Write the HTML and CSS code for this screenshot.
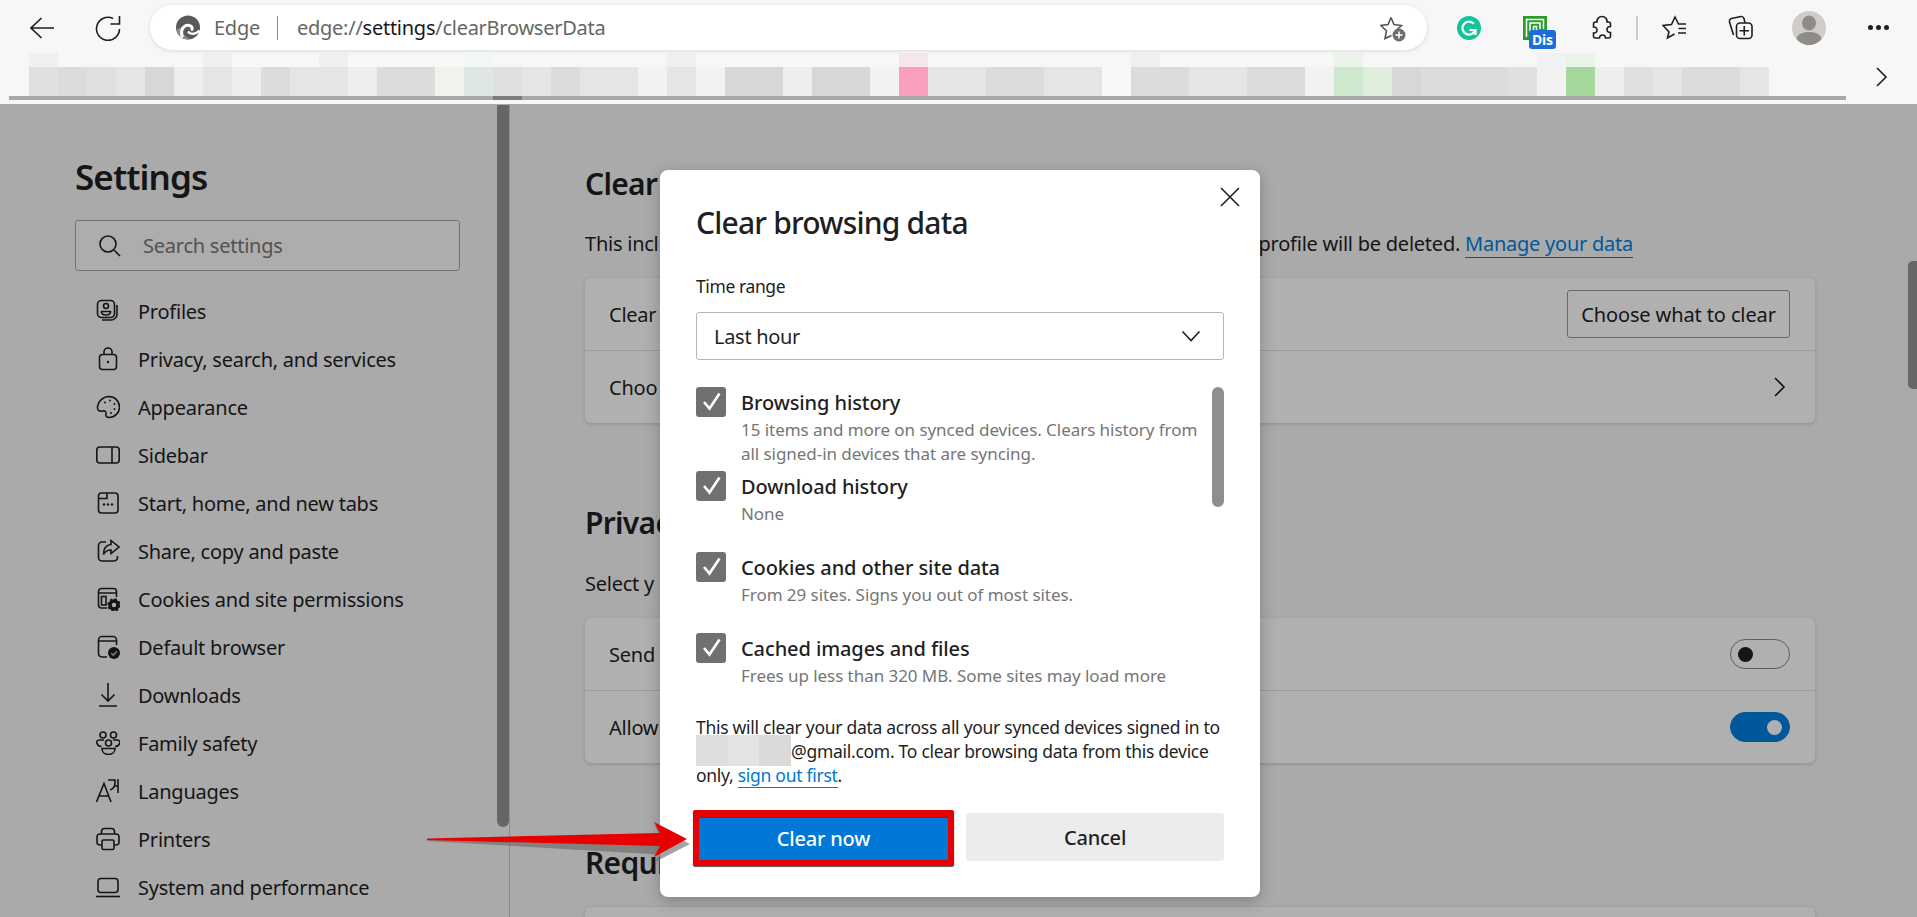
FILE: index.html
```html
<!DOCTYPE html>
<html lang="en">
<head>
<meta charset="utf-8">
<title>Clear browsing data</title>
<link rel="stylesheet" href="styles.css">
</head>
<body>
<svg class="defs" width="0" height="0" aria-hidden="true"><defs>
<symbol id="check" viewBox="0 0 30 30"><path d="M8 15l5.500 6.500L23.500 6.500" fill="none" stroke="#fff" stroke-width="2.600"/></symbol>
</defs></svg>
<header class="toolbar">
  <svg class="back" width="24" height="22" viewBox="0 0 24 22"><path d="M11.500 1L1 11l10.500 10M1 11h23" class="ln"/></svg>
  <svg class="refresh" width="26" height="26" viewBox="0 0 26 26"><path d="M18 3.500A11.500 11.500 0 1 0 24.500 14" class="ln"/><path d="M24.500 1v8h-9" class="ln"/></svg>
  <div class="address">
    <svg class="edge" width="24" height="25" viewBox="0 0 24 25"><circle cx="12" cy="12.500" r="12" fill="#5a5a5a"/><path d="M1 14c0 6 5 10.500 11 10.500 1 0 2-.1 3-.4C9 23 5 17 8 11z" fill="#8e8e8e"/><path d="M6.500 22.500C3.500 15.500 8 9 13.500 10.500c3 .8 3.500 3.300 1.500 4.500" fill="none" stroke="#fff" stroke-width="3"/><path d="M12 16.500c2.500 3.500 7.500 3 11.500-1" fill="none" stroke="#fff" stroke-width="2.400"/></svg>
    <span class="edge-name">Edge</span>
    <span class="addr-sep"></span>
    <span class="url">edge://<b>settings</b>/clearBrowserData</span>
    <svg class="star-add" width="27" height="26" viewBox="0 0 27 26"><path d="M11 1.500l3 7 7.500 1-5.500 5M11 1.500l-3 7-7 1 5.500 5.500-1.500 7.500 6.500-3" class="star-ln"/><circle cx="19" cy="19" r="6.500" fill="#6e6e6e"/><path d="M19 15.500v7M15.500 19h7" stroke="#fff" stroke-width="1.500"/></svg>
  </div>
  <svg class="grammarly" width="24" height="24" viewBox="0 0 24 24"><circle cx="12" cy="12" r="12" fill="#15c39a"/><path d="M16.800 7.800a6.500 6.500 0 1 0 1.200 6.700" fill="none" stroke="#fff" stroke-width="2.200"/><path d="M12.500 14h6v5" fill="none" stroke="#fff" stroke-width="2.200"/></svg>
  <div class="ext">
    <svg width="26" height="26" viewBox="0 0 26 26"><rect x="1" y="1" width="24" height="24" fill="#2a9d2a"/><path d="M4.500 22V4.500h17V14M8 22V8h10v6M11.500 22V11.500h3V17" fill="none" stroke="#fff" stroke-width="1.500"/></svg>
    <span class="dis">Dis</span>
  </div>
  <svg class="puzzle" width="24" height="26" viewBox="0 0 24 26"><path d="M7 7c-.5-3 2-5.500 5-5.500s5.500 2.500 5 5.500h1.500c1.500 0 2 1 2 2v2.500c-2.500 0-3.500 1.500-3.500 3s1 3 3.500 3V21c0 1.500-.5 2-2 2h-3c0-2-1-3-3-3s-3 1-3 3H5.500c-1.500 0-2-.5-2-2v-3c2 0 3.500-1 3.500-3s-1.500-3-3.500-3V9c0-1 .5-2 2-2z" class="ln"/></svg>
  <span class="tb-sep"></span>
  <svg class="fav" width="26" height="25" viewBox="0 0 26 25"><path d="M16.500 9L13 2 9.500 9.500 1 10.500l6 6.500L5.500 23l7-4" class="ln"/><path d="M16 9h8M16.500 13.500h7.500M16 18h8" class="ln"/></svg>
  <svg class="coll" width="26" height="26" viewBox="0 0 26 26"><path d="M5.500 20L1.500 7a3 3 0 0 1 2-3.500L13 1.500a3 3 0 0 1 3 2L17 8" class="ln"/><rect x="8.500" y="8" width="15.500" height="15.500" rx="3.500" class="ln"/><path d="M16.250 11v9.500M11.500 15.750h9.500" class="ln"/></svg>
  <div class="avatar"><svg width="34" height="34" viewBox="0 0 34 34"><circle cx="17" cy="17" r="17" fill="#cfcdc9"/><ellipse cx="17" cy="12" rx="7" ry="7.500" fill="#8f8c88"/><path d="M4.500 28c1-5 6-7 12.500-7s11.500 2 12.500 7c-3 3.500-7.500 6-12.500 6s-9.500-2.500-12.500-6z" fill="#8f8c88"/></svg></div>
  <div class="more"><i></i><i></i><i></i></div>
</header>
<div class="bookmarks">
  <div class="mosaic">
    <div class="strip top">
      <i class="e"></i><i></i><i></i><i></i><i></i><i></i><i class="e"></i><i></i><i></i><i></i><i class="e"></i><i></i><i></i><i></i><i></i><i class="m"></i><i></i><i></i><i></i><i></i><i></i><i></i><i class="e"></i><i></i><i></i><i></i><i></i><i></i><i></i><i></i><i class="p"></i><i></i><i></i><i></i><i></i><i></i><i></i><i></i><i class="e"></i><i></i><i></i><i></i><i></i><i></i><i></i><i class="v"></i><i></i><i></i><i></i><i></i><i></i><i></i><i class="b"></i><i class="v"></i>
    </div>
    <div class="strip low">
      <i class="g0"></i><i class="g1"></i><i class="g0"></i><i class="g3"></i><i class="g2"></i><i class="g4"></i><i class="g3"></i><i class="g4"></i><i class="g1"></i><i class="g3"></i><i class="g3"></i><i class="g4"></i><i class="g1"></i><i class="g1"></i><i class="cream"></i><i class="mint"></i><i class="mauve"></i><i class="g3"></i><i class="g1"></i><i class="g3"></i><i class="g3"></i><i class="g5"></i><i class="g3"></i><i class="g5"></i><i class="g2"></i><i class="g2"></i><i class="g4"></i><i class="g2"></i><i class="g2"></i><i class="g5"></i><i class="pink"></i><i class="g3"></i><i class="g3"></i><i class="g1"></i><i class="g1"></i><i class="g3"></i><i class="g3"></i><i class="g6"></i><i class="g1"></i><i class="g1"></i><i class="g3"></i><i class="g3"></i><i class="g1"></i><i class="g1"></i><i class="g5"></i><i class="gr1"></i><i class="gr2"></i><i class="g2"></i><i class="g1"></i><i class="g1"></i><i class="g1"></i><i class="g0"></i><i class="g5"></i><i class="gr0"></i><i class="g4"></i><i class="g0"></i><i class="g3"></i><i class="g1"></i><i class="g1"></i><i class="g3"></i>
    </div>
    <div class="hbar"><span class="hthumb"></span></div>
  </div>
  <svg class="bm-next" width="14" height="20" viewBox="0 0 14 20"><path d="M2 1l9 9-9 9" class="ln"/></svg>
</div>
<div class="page">
  <aside class="sidebar">
    <h1 class="side-title">Settings</h1>
    <div class="search">
      <svg width="24" height="24" viewBox="0 0 24 24"><circle cx="10" cy="10" r="8" class="ln"/><path d="M16 16l6 6" class="ln"/></svg>
      <span>Search settings</span>
    </div>
    <nav class="nav">
      <a><svg width="24" height="24" viewBox="0 0 24 24"><rect x="1.500" y="1.500" width="17" height="17" rx="4" class="ln"/><circle cx="10" cy="7" r="2.500" class="ln"/><path d="M5.500 12.500h9v1a4 4 0 0 1-4 2.500h-1a4 4 0 0 1-4-2.500z" class="ln"/><path d="M21 6v9a6 6 0 0 1-6 6H6" class="ln"/></svg>Profiles</a>
      <a><svg width="24" height="24" viewBox="0 0 24 24"><rect x="3.500" y="7.500" width="17" height="15" rx="3" class="ln"/><path d="M8 7.500V5a4 4 0 0 1 8 0v2.500" class="ln"/><circle cx="12" cy="15" r="1.200" fill="#1f1f1f"/></svg>Privacy, search, and services</a>
      <a><svg width="24" height="24" viewBox="0 0 24 24"><path d="M13 1.500a10.500 10.500 0 0 1 0 21c-2.500 0-3.500-1.500-3-3.500.4-2-1-3.500-3-3-3 .7-5.500-.5-5.500-3C1.500 6.500 7 1.500 13 1.500z" class="ln"/><circle cx="9" cy="7.500" r="1" fill="#1f1f1f"/><circle cx="14" cy="5.500" r="1" fill="#1f1f1f"/><circle cx="18.500" cy="9" r="1" fill="#1f1f1f"/><circle cx="18.500" cy="14" r="1" fill="#1f1f1f"/><circle cx="15" cy="18" r="1" fill="#1f1f1f"/></svg>Appearance</a>
      <a><svg width="24" height="24" viewBox="0 0 24 24"><rect x=".8" y="4" width="22.400" height="16" rx="3" class="ln"/><path d="M16 4v16" class="ln"/></svg>Sidebar</a>
      <a><svg width="24" height="24" viewBox="0 0 24 24"><rect x="2.500" y="2" width="19.500" height="20" rx="3" class="ln"/><path d="M2.500 7.500h8.500V2" class="ln"/><circle cx="8" cy="13.500" r="1.200" fill="#1f1f1f"/><circle cx="12" cy="13.500" r="1.200" fill="#1f1f1f"/><circle cx="16" cy="13.500" r="1.200" fill="#1f1f1f"/></svg>Start, home, and new tabs</a>
      <a><svg width="24" height="24" viewBox="0 0 24 24"><path d="M10 3H6a3.500 3.500 0 0 0-3.500 3.500v12A3.500 3.500 0 0 0 6 22h12a3.500 3.500 0 0 0 3.500-3.500V17" class="ln"/><path d="M15 1.500l8 6.500-8 6.500V11c-3.500 0-6 1.500-7.500 4.500C7.500 10 10 6 15 5.500z" class="ln"/></svg>Share, copy and paste</a>
      <a><svg width="24" height="24" viewBox="0 0 24 24"><path d="M11 21H5.500a3 3 0 0 1-3-3V4.500a3 3 0 0 1 3-3h12a3 3 0 0 1 3 3V10M2.500 6h18" class="ln"/><rect x="5.500" y="9.500" width="4.500" height="8.500" class="ln"/><circle cx="18" cy="18" r="4" fill="none" stroke="#1f1f1f" stroke-width="3.500"/><circle cx="18" cy="18" r="5.800" fill="none" stroke="#1f1f1f" stroke-width="1.800" stroke-dasharray="2.500 2"/></svg>Cookies and site permissions</a>
      <a><svg width="24" height="24" viewBox="0 0 24 24"><path d="M11 22H6a3.500 3.500 0 0 1-3.500-3.500V5A3.500 3.500 0 0 1 6 1.500h11A3.500 3.500 0 0 1 20.500 5v5M2.500 6h18" class="ln"/><circle cx="18" cy="18" r="6" fill="#1f1f1f"/><path d="M15.300 18.200l2 2 3.500-4" fill="none" stroke="#bbb" stroke-width="1.400"/></svg>Default browser</a>
      <a><svg width="24" height="24" viewBox="0 0 24 24"><path d="M12 0v18M5.500 11.500L12 18l6.500-6.500M3 23h18" class="ln"/></svg>Downloads</a>
      <a><svg width="24" height="24" viewBox="0 0 24 24"><circle cx="7" cy="4" r="3" class="ln"/><circle cx="17.500" cy="4" r="3" class="ln"/><circle cx="12.500" cy="12" r="3" class="ln"/><path d="M8 9H3.500C1.500 9 0 10.500 1 12.500c.7 2 2.500 3 4.500 3M17 9h4c2 0 3.500 1.500 2.500 3.500-.7 2-2.500 3-4.500 3M6 17.500h13c0 4-3 6-6.500 6s-6.500-2-6.500-6z" class="ln"/></svg>Family safety</a>
      <a><svg width="24" height="24" viewBox="0 0 24 24"><path d="M.5 23L8 4.500 15 23M3.500 17h9M12 1h7v3c0 3-2 6-5 7M22 0v14M22 7h-3" class="ln"/></svg>Languages</a>
      <a><svg width="24" height="24" viewBox="0 0 24 24"><path d="M5.500 7V4.500a3 3 0 0 1 3-3h7a3 3 0 0 1 3 3V7" class="ln"/><path d="M5.500 18H4a3 3 0 0 1-3-3v-5a3 3 0 0 1 3-3h16a3 3 0 0 1 3 3v5a3 3 0 0 1-3 3h-1.500" class="ln"/><rect x="6" y="13" width="12" height="9.500" rx="1.500" class="ln"/></svg>Printers</a>
      <a><svg width="24" height="24" viewBox="0 0 24 24"><rect x="2" y="3.500" width="20" height="14" rx="3" class="ln"/><path d="M0 21.500h24" class="ln"/></svg>System and performance</a>
    </nav>
    <span class="side-scroll"></span>
  </aside>
  <main class="main">
    <h2 class="head">Clear</h2>
    <div class="intro">
      <span class="intro-left">This incl</span>
      <span>profile will be deleted. <a class="manage">Manage your data</a></span>
    </div>
    <section class="card">
      <div class="row"><span>Clear</span><span class="outline">Choose what to clear</span></div>
      <div class="row"><span>Choo</span><svg width="14" height="20" viewBox="0 0 14 20"><path d="M2 1l9 9-9 9" class="ln"/></svg></div>
    </section>
    <h2 class="head privacy">Privac</h2>
    <div class="select-line">Select y</div>
    <section class="card">
      <div class="row"><span>Send</span><span class="toggle"><i></i></span></div>
      <div class="row"><span>Allow</span><span class="toggle on"><i></i></span></div>
    </section>
    <h2 class="head privacy">Requi</h2>
    <section class="card last"></section>
  </main>
  <span class="main-scroll"></span>
  <div class="overlay"></div>
  <div class="dialog">
    <svg class="close" width="20" height="20" viewBox="0 0 20 20"><path d="M1 1l18 18M19 1L1 19" class="ln"/></svg>
    <h3 class="d-title">Clear browsing data</h3>
    <div class="d-label">Time range</div>
    <div class="d-select"><span>Last hour</span><svg width="20" height="12" viewBox="0 0 20 12"><path d="M1.500 1.500l8.500 9 8.500-9" class="ln"/></svg></div>
    <div class="d-list">
      <div class="opt"><span class="cb"><svg width="30" height="30"><use href="#check"/></svg></span><div><div class="o-name">Browsing history</div><div class="o-desc">15 items and more on synced devices. Clears history from<br>all signed-in devices that are syncing.</div></div></div>
      <div class="opt o2"><span class="cb"><svg width="30" height="30"><use href="#check"/></svg></span><div><div class="o-name">Download history</div><div class="o-desc">None</div></div></div>
      <div class="opt o3"><span class="cb"><svg width="30" height="30"><use href="#check"/></svg></span><div><div class="o-name">Cookies and other site data</div><div class="o-desc">From 29 sites. Signs you out of most sites.</div></div></div>
      <div class="opt o3"><span class="cb"><svg width="30" height="30"><use href="#check"/></svg></span><div><div class="o-name">Cached images and files</div><div class="o-desc">Frees up less than 320 MB. Some sites may load more</div></div></div>
      <span class="d-scroll"></span>
    </div>
    <div class="d-note">
      <div class="n-line">This will clear your data across all your synced devices signed in to</div>
      <div class="n-line"><span class="redact"><i></i><i></i><i></i></span>@gmail.com. To clear browsing data from this device</div>
      <div class="n-line">only, <a class="signout">sign out first</a>.</div>
    </div>
    <div class="d-actions">
      <span class="btn primary">Clear now</span>
      <span class="btn secondary">Cancel</span>
    </div>
  </div>
  <svg class="arrow" width="270" height="44" viewBox="0 0 270 44"><path d="M2 21.500L235 18 230 8l35 18-35 18 4-7.500L2 23z" fill="#666" opacity=".6"/><path d="M2 20.500L235 15 229 4l33 17-33 18 6-11L2 22z" fill="#e60000"/></svg>
</div>
</body>
</html>
```
FILE: styles.css
```css
* { box-sizing: border-box; }
html, body { margin: 0; height: 100%; }
body {
  width: 1917px; height: 917px; overflow: hidden;
  font-family: "Noto Sans", "Open Sans", sans-serif;
  color: #1f1f1f; background: #f7f7f7;
  font-size: 20px;
}
.defs { position: absolute; }
.ln { fill: none; stroke: #1f1f1f; stroke-width: 1.6; }
.star-ln { fill: none; stroke: #555; stroke-width: 1.6; }

.toolbar { height: 53px; display: flex; align-items: center; padding-top: 2px; }
.back { margin-left: 30px; }
.refresh { margin-left: 41px; }
.address {
  margin-left: 29px; width: 1277px; height: 45px; background: #fff;
  border-radius: 23px; display: flex; align-items: center; padding-left: 26px;
  box-shadow: 0 1px 4px rgba(0,0,0,.12);
  letter-spacing: -.26px;
}
.edge-name { margin-left: 14px; color: #666; width: 48px; }
.addr-sep { width: 1px; height: 24px; background: #8a8a8a; margin-left: 15px; }
.url { margin-left: 19px; color: #666; }
.url b { font-weight: 400; color: #1a1a1a; }
.star-add { margin-left: auto; margin-right: 20px; margin-top: 2px; }
.grammarly { margin-left: 30px; }
.ext { margin-left: 41px; position: relative; width: 26px; height: 26px; }
.ext svg { display: block; }
.dis {
  position: absolute; left: 7px; top: 15px; width: 27px; height: 19px; border-radius: 3px;
  background: #1a6ddb; color: #fff; font-size: 14px; font-weight: 700; line-height: 19px; text-align: center; letter-spacing: -.2px;
}
.puzzle { margin-left: 42px; }
.tb-sep { width: 2px; height: 24px; background: #ccc; margin-left: 22px; }
.fav { margin-left: 24px; }
.coll { margin-left: 40px; }
.avatar { margin-left: 38px; width: 34px; height: 34px; }
.avatar svg { display: block; }
.more { margin-left: 42px; display: flex; gap: 3px; }
.more i { width: 5px; height: 5px; border-radius: 50%; background: #1f1f1f; }

.bookmarks { height: 51px; display: flex; position: relative; }
.mosaic { padding-left: 29px; width: 1846px; }
.strip { display: flex; }
.strip i { display: block; width: 29px; flex: none; }
.top { height: 14px; }
.low { height: 29px; }
.top .e { background: #efefef; } .top .m { background: #f2f6f4; } .top .p { background: #f6e6ec; }
.top .v { background: #eaf3e8; } .top .b { background: #eff2f7; }
.g0 { background: #e0e0e0; } .g1 { background: #dcdcdc; } .g2 { background: #d7d7d7; }
.g3 { background: #e5e5e5; } .g4 { background: #eeeeee; } .g5 { background: #f2f2f2; } .g6 { background: #f8f8f8; }
.cream { background: #f3f1ec; } .mint { background: #dfe7e3; } .mauve { background: #e2dfe0; }
.pink { background: #f9a0bf; } .gr0 { background: #a5d99c; } .gr1 { background: #cfe8cd; } .gr2 { background: #e0eedd; }
.hbar { height: 4px; margin-left: -20px; background: #a9a9a9; }
.hthumb { display: block; width: 29px; height: 4px; margin-left: 484px; background: #7d7d7d; }
.bm-next { position: absolute; left: 1875px; top: 14px; }

.page { position: relative; height: 813px; display: flex; overflow: hidden; }
.overlay { position: absolute; inset: 0; background: rgba(0,0,0,.31); }

.sidebar { width: 510px; flex: none; padding: 51px 0 0 75px; position: relative; border-right: 1px solid #ccc; }
.side-title { margin: 0; font-size: 35px; font-weight: 600; line-height: 44px; letter-spacing: -.9px; }
.search {
  width: 385px; height: 51px; margin-top: 21px; border: 1px solid #a5a5a5; border-radius: 3px;
  display: flex; align-items: center; padding-left: 22px; color: #777; letter-spacing: -.24px;
  background: #fbfbfb;
}
.search span { margin-left: 21px; }
.nav { margin-top: 16px; }
.nav a { height: 48px; display: flex; align-items: center; padding-left: 21px; letter-spacing: -.24px; }
.nav svg { margin-right: 18px; flex: none; }
.side-scroll { position: absolute; right: 0; top: 1px; width: 12px; height: 722px; border-radius: 0 0 6px 6px; background: #949494; }

.main { flex: 1; padding: 60px 102px 0 75px; }
.head { margin: 0; font-size: 30px; line-height: 40px; font-weight: 600; letter-spacing: -.7px; }
.privacy { margin-top: 80px; }
.intro { display: flex; justify-content: flex-end; margin-top: 28px; padding-right: 182px; line-height: 24px; letter-spacing: -.24px; }
.intro-left { margin-right: auto; }
.manage { color: #0082e0; border-bottom: 1px solid #0082e0; }
.select-line { margin-top: 29px; line-height: 24px; letter-spacing: -.24px; }
.card { margin-top: 22px; background: #fff; border-radius: 6px; box-shadow: 0 1px 4px rgba(0,0,0,.18); }
.head + .card { margin-top: 24px; }
.last { height: 60px; }
.row { height: 72px; display: flex; align-items: center; justify-content: space-between; padding: 0 25px 0 24px; letter-spacing: -.24px; }
.row + .row { height: 73px; border-top: 1px solid #e2e2e2; }
.outline { width: 223px; height: 48px; border: 1px solid #999; border-radius: 3px; display: flex; align-items: center; justify-content: center; letter-spacing: -.12px; }
.row svg { margin-right: 3px; }
.toggle { width: 60px; height: 30px; border: 1px solid #8a8a8a; border-radius: 15px; display: flex; align-items: center; padding-left: 7px; }
.toggle i { width: 15px; height: 15px; border-radius: 50%; background: #1f1f1f; }
.toggle.on { background: #0080e0; border-color: #0080e0; justify-content: flex-end; padding: 0 7px 0 0; }
.toggle.on i { background: #fff; }
.main-scroll { position: absolute; right: 0; top: 157px; width: 9px; height: 128px; border-radius: 5px 0 0 5px; background: #949494; }

.dialog {
  position: absolute; left: 660px; top: 66px; width: 600px; height: 727px; background: #fff;
  border-radius: 8px; padding: 0 36px; box-shadow: 0 4px 16px rgba(0,0,0,.25);
}
.close { position: absolute; right: 20px; top: 17px; }
.d-title { margin: 0; padding-top: 33px; font-size: 30px; line-height: 40px; font-weight: 500; letter-spacing: -.8px; }
.d-label { margin-top: 31px; font-size: 17.5px; line-height: 24px; letter-spacing: -.4px; }
.d-select {
  margin-top: 14px; height: 48px; border: 1px solid #b5b5b5; border-radius: 3px;
  display: flex; align-items: center; justify-content: space-between; padding: 0 22px 0 17px; letter-spacing: -.3px;
}
.d-list { position: relative; height: 306px; margin-top: 27px; }
.opt { display: flex; gap: 15px; align-items: flex-start; }
.o2 { margin-top: 5px; }
.o3 { margin-top: 26px; }
.cb { width: 30px; height: 30px; flex: none; background: #707070; border-radius: 3px; display: block; }
.cb svg { display: block; }
.o-name { font-weight: 500; line-height: 24px; margin-top: 4px; letter-spacing: -.1px; }
.o-desc { font-size: 17px; line-height: 24px; color: #767676; margin-top: 3px; letter-spacing: -.05px; white-space: nowrap; }
.d-scroll { position: absolute; right: 0; top: 0; width: 12px; height: 120px; border-radius: 6px; background: #8f8f8f; }
.d-note { margin-top: 22px; font-size: 17.5px; letter-spacing: -.28px; white-space: nowrap; }
.n-line { height: 24px; line-height: 24px; }
.redact { display: inline-flex; width: 95px; height: 31px; margin: -4px 0; vertical-align: top; }
.redact i { flex: 1; background: #ddd; }
.redact i + i { background: #e4e4e4; }
.redact i + i + i { background: #dadada; }
.signout { color: #0078d4; border-bottom: 1px solid #0078d4; }
.d-actions { display: flex; justify-content: space-between; margin-top: 26px; }
.btn { height: 48px; display: flex; align-items: center; justify-content: center; font-weight: 500; letter-spacing: -.2px; }
.primary {
  width: 261px; height: 56px; margin: -3px 0 0 -3px; background: #0078d7; color: #fff;
  border: 6px solid #e60000; border-top-width: 7px; border-radius: 2px; box-shadow: 0 1px 1px #555, inset 0 1px 0 #124a7a;
}
.secondary { width: 258px; background: #ececec; border-radius: 3px; }
.arrow { position: absolute; left: 425px; top: 714px; }
```
